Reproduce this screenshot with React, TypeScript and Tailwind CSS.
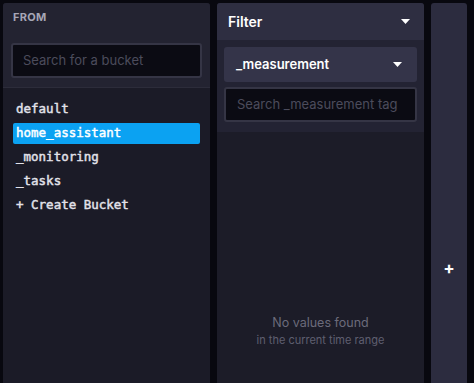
import React from "react";

const Caret = () => (
  <svg width="9" height="5" viewBox="0 0 9 5" className="shrink-0">
    <path d="M0 0 H9 L4.5 5 Z" fill="#ffffff" />
  </svg>
);

export default function App() {
  const buckets = ["default", "home_assistant", "_monitoring", "_tasks", "+ Create Bucket"];
  return (
    <div
      className="w-[474px] h-[383px] bg-[#08080f] flex gap-[7px] pl-[3px] pt-[3px] overflow-hidden"
      style={{ fontFamily: "Inter, Roboto, sans-serif" }}
    >
      {/* Left panel */}
      <div className="w-[207px] h-[400px] flex flex-col rounded-t-[3px] overflow-hidden bg-[#1b1b27]">
        <div className="bg-[#232331] h-[85px] px-[8px] pt-[6px] border-b border-[#2c2c3a]">
          <div className="text-[11px] leading-[16px] font-bold text-[#a6a6b6] tracking-[0.3px] pl-[2px]">FROM</div>
          <div className="mt-[18px] h-[35px] bg-[#0b0b13] border-2 border-[#353545] rounded-[3px] flex items-center pl-[10px] text-[13px] text-[#4c4c5c]">
            Search for a bucket
          </div>
        </div>
        <div className="flex flex-col px-[10px] pt-[11px]" style={{ fontFamily: '"DejaVu Sans Mono", "Liberation Mono", monospace' }}>
          {buckets.map((b) => (
            <div
              key={b}
              className={
                "h-[21px] mb-[3px] flex items-center pl-[3px] text-[12.5px] [-webkit-text-stroke:0.45px_currentColor] rounded-[2px] " +
                (b === "home_assistant" ? "bg-[#0ba2f2] text-white" : "text-[#e2e2ea]")
              }
            >
              {b}
            </div>
          ))}
        </div>
      </div>

      {/* Middle panel */}
      <div className="w-[207px] h-[400px] flex flex-col rounded-t-[3px] overflow-hidden bg-[#1c1c28]">
        <div className="h-[37px] bg-[#2e2e41] flex items-center justify-between pl-[11px] pr-[14px]">
          <span className="text-[14px] font-semibold text-white">Filter</span>
          <Caret />
        </div>
        <div className="bg-[#232333] px-[7px] pt-[7px] pb-[10px]">
          <div className="h-[35px] bg-[#343449] rounded-[3px] flex items-center justify-between pl-[12px] pr-[15px]">
            <span className="text-[13px] font-semibold text-white">_measurement</span>
            <Caret />
          </div>
          <div className="mt-[5px] h-[35px] bg-[#0b0b13] border-2 border-[#353545] rounded-[3px] flex items-center pl-[11px] text-[13px] text-[#4c4c5c] whitespace-nowrap overflow-hidden">
            Search _measurement tag
          </div>
        </div>
        <div className="flex flex-col items-center pt-[182px]">
          <div className="text-[12.5px] text-[#6b6b7b] leading-[18px]">No values found</div>
          <div className="text-[11px] text-[#5f5f70] leading-[16px]">in the current time range</div>
        </div>
      </div>

      {/* Right panel */}
      <div className="w-[36px] h-[400px] bg-[#2c2c3f] rounded-t-[3px] flex flex-col items-center pt-[257px]">
        <span className="text-[17px] font-bold text-white leading-none">+</span>
      </div>
    </div>
  );
}
